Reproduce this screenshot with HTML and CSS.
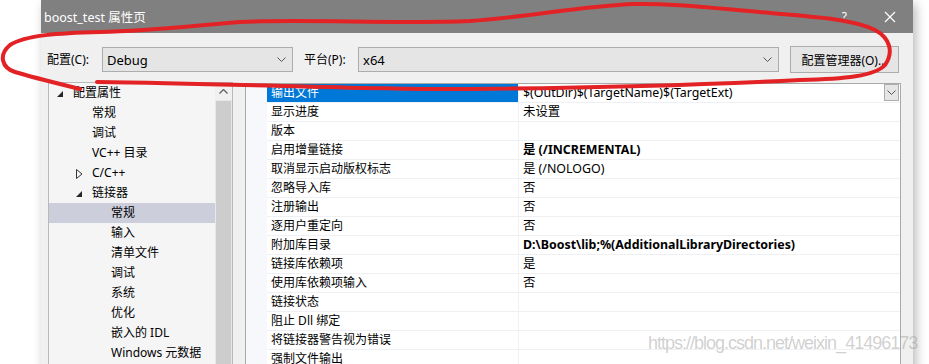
FILE: index.html
```html
<!DOCTYPE html>
<html lang="zh-CN">

<head>
    <meta charset="utf-8" />
    <title>boost_test 属性页</title>
    <link rel="stylesheet" href="styles.css">
</head>

<body>
    <div class="dialog">
        <div class="titlebar">
            <span class="title">boost_test 属性页</span>
            <span class="help">?</span>
            <svg class="close" width="12" height="12" viewBox="0 0 12 12">
                <path d="M1 1 L11 11 M11 1 L1 11" stroke="#fff" stroke-width="1.2" fill="none" />
            </svg>
        </div>

        <div class="toolbar">
            <label class="label label-config">配置(C):</label>
            <div class="combo combo-config">
                <span>Debug</span>
                <svg class="chevron" width="9" height="5" viewBox="0 0 9 5">
                    <path d="M0.5 0.5 L4.5 4.5 L8.5 0.5" stroke="#555" fill="none" />
                </svg>
            </div>
            <label class="label label-platform">平台(P):</label>
            <div class="combo combo-platform">
                <span>x64</span>
                <svg class="chevron" width="9" height="5" viewBox="0 0 9 5">
                    <path d="M0.5 0.5 L4.5 4.5 L8.5 0.5" stroke="#555" fill="none" />
                </svg>
            </div>
            <button class="btn-manager">配置管理器(O)...</button>
        </div>

        <div class="content">
            <div class="tree">
                <ul class="tree-list">
                    <li class="lvl0"><span class="exp"><svg width="6" height="6" viewBox="0 0 6 6"><path d="M6 0 L6 6 L0 6 Z" fill="#262626" /></svg></span>配置属性</li>
                    <li class="lvl1">常规</li>
                    <li class="lvl1">调试</li>
                    <li class="lvl1">VC++ 目录</li>
                    <li class="lvl1 has-exp"><span class="exp"><svg width="7" height="10" viewBox="0 0 7 10"><path d="M0.5 0.5 L6 5 L0.5 9.5 Z" fill="none" stroke="#333" /></svg></span>C/C++</li>
                    <li class="lvl1 has-exp"><span class="exp"><svg width="6" height="6" viewBox="0 0 6 6"><path d="M6 0 L6 6 L0 6 Z" fill="#262626" /></svg></span>链接器</li>
                    <li class="lvl2 selected">常规</li>
                    <li class="lvl2">输入</li>
                    <li class="lvl2">清单文件</li>
                    <li class="lvl2">调试</li>
                    <li class="lvl2">系统</li>
                    <li class="lvl2">优化</li>
                    <li class="lvl2">嵌入的 IDL</li>
                    <li class="lvl2">Windows 元数据</li>
                </ul>
                <div class="scrollbar">
                    <div class="scroll-up">
                        <svg width="9" height="5" viewBox="0 0 9 5"><path d="M0.5 4.5 L4.5 0.5 L8.5 4.5" stroke="#606060" stroke-width="1.3" fill="none" /></svg>
                    </div>
                    <div class="thumb"></div>
                </div>
            </div>

            <div class="grid">
                <div class="gutter"></div>
                <div class="rows">
                    <div class="row">
                        <div class="name active">输出文件</div>
                        <div class="value">$(OutDir)$(TargetName)$(TargetExt)
                            <span class="drop">
                                <svg width="9" height="5" viewBox="0 0 9 5"><path d="M0.5 0.5 L4.5 4.5 L8.5 0.5" stroke="#555" fill="none" /></svg>
                            </span>
                        </div>
                    </div>
                    <div class="row"><div class="name">显示进度</div><div class="value">未设置</div></div>
                    <div class="row"><div class="name">版本</div><div class="value"></div></div>
                    <div class="row"><div class="name">启用增量链接</div><div class="value bold">是 (/INCREMENTAL)</div></div>
                    <div class="row"><div class="name">取消显示启动版权标志</div><div class="value">是 (/NOLOGO)</div></div>
                    <div class="row"><div class="name">忽略导入库</div><div class="value">否</div></div>
                    <div class="row"><div class="name">注册输出</div><div class="value">否</div></div>
                    <div class="row"><div class="name">逐用户重定向</div><div class="value">否</div></div>
                    <div class="row"><div class="name">附加库目录</div><div class="value bold">D:\Boost\lib;%(AdditionalLibraryDirectories)</div></div>
                    <div class="row"><div class="name">链接库依赖项</div><div class="value">是</div></div>
                    <div class="row"><div class="name">使用库依赖项输入</div><div class="value">否</div></div>
                    <div class="row"><div class="name">链接状态</div><div class="value"></div></div>
                    <div class="row"><div class="name">阻止 Dll 绑定</div><div class="value"></div></div>
                    <div class="row"><div class="name">将链接器警告视为错误</div><div class="value"></div></div>
                    <div class="row"><div class="name">强制文件输出</div><div class="value"></div></div>
                </div>
            </div>
        </div>
    </div>

    <svg class="annotation" width="929" height="364" viewBox="0 0 929 364">
        <path d="M97 82 C250 84, 380 90, 470 89 C580 88, 700 85, 800 80 C845 79, 875 76, 885 65 C894 52, 890 38, 875 30 C855 20, 820 17, 770 13 C720 9, 680 3, 635 4 C580 6, 530 17, 470 21 C400 24, 300 19, 240 22 C200 25, 150 31, 100 32 C60 33, 25 35, 10 45 C-2 55, 2 68, 15 72 C35 78, 60 84, 80 89"
            stroke="#e32226" stroke-width="4" fill="none" stroke-linecap="round" stroke-linejoin="round" />
    </svg>

    <div class="watermark">https://blog.csdn.net/weixin_41496173</div>
</body>

</html>
```

FILE: styles.css
```css
:root {
    --dialog-bg: #f0f0f0;
    --title-bg: #808080;
    --border-color: #adadad;
    --combo-bg: #e5e5e5;
    --tree-bg: #f5f5f5;
    --tree-selected: #cccedb;
    --grid-line: #eef0f3;
    --row-active: #0078d7;
    --text-color: #000;
}

html,
body {
    margin: 0;
    height: 364px;
    overflow: hidden;
    background: #fff;
}

body {
    font-family: "Noto Sans", "Noto Sans CJK SC", sans-serif;
    font-size: 12px;
    color: var(--text-color);
    position: relative;
}

.dialog {
    margin-left: 41px;
    width: 872px;
    height: 380px;
    background: var(--dialog-bg);
    box-shadow: 3px 4px 10px rgba(0, 0, 0, 0.28);
}

.titlebar {
    height: 33px;
    background: var(--title-bg);
    color: #fff;
    display: flex;
    align-items: center;
    padding-left: 3px;
}

.title {
    font-size: 12.5px;
    flex: 1;
}

.help {
    font-size: 12px;
    margin-right: 37px;
}

.close {
    margin-right: 17px;
}

.toolbar {
    display: flex;
    align-items: center;
    height: 49px;
    box-sizing: border-box;
    padding: 13px 0 9px 6px;
}

.label {
    line-height: 16px;
}

.label-config {
    width: 55px;
}

.label-platform {
    width: 54px;
    margin-left: 11px;
}

.combo {
    height: 25px;
    box-sizing: border-box;
    border: 1px solid var(--border-color);
    background: var(--combo-bg);
    display: flex;
    align-items: center;
    justify-content: space-between;
    padding: 0 6px 0 4px;
    font-size: 13px;
}

.combo-config {
    width: 191px;
}

.combo-platform {
    width: 421px;
}

.btn-manager {
    margin-left: 11px;
    width: 109px;
    height: 27px;
    border: 1px solid var(--border-color);
    background: var(--combo-bg);
    font-family: inherit;
    font-size: 12px;
    color: var(--text-color);
    padding: 0;
    white-space: nowrap;
}

.content {
    display: flex;
    align-items: flex-start;
    padding-left: 7px;
}

.tree {
    width: 185px;
    height: 300px;
    box-sizing: border-box;
    border: 1px solid #b9b9b9;
    background: var(--tree-bg);
    display: flex;
}

.tree-list {
    list-style: none;
    margin: 0;
    padding: 0;
    flex: 1;
}

.tree-list li {
    height: 20px;
    line-height: 20px;
    display: flex;
    align-items: center;
    white-space: nowrap;
}

.tree-list .exp {
    width: 16px;
    display: flex;
    align-items: center;
}

.tree-list .lvl0 {
    padding-left: 8px;
}

.tree-list .lvl0 .exp svg {
    margin-top: 2px;
}

.tree-list .lvl1 {
    padding-left: 43px;
}

.tree-list .lvl1.has-exp {
    padding-left: 27px;
}

.tree-list .lvl1.has-exp .exp svg {
    margin-top: 1px;
}

.tree-list .lvl2 {
    padding-left: 62px;
}

.tree-list .selected {
    background: var(--tree-selected);
}

.scrollbar {
    width: 17px;
    background: #e8e8e8;
    display: flex;
    flex-direction: column;
}

.scroll-up {
    height: 17px;
    display: flex;
    align-items: center;
    justify-content: center;
    background: #f0f0f0;
}

.thumb {
    margin: 1px 1px 0 1px;
    flex: 1;
    background: #cdcdcd;
}

.grid {
    margin-left: 12px;
    margin-top: 1px;
    width: 656px;
    height: 300px;
    box-sizing: border-box;
    border: 1px solid #a9a9a9;
    background: #fff;
    display: flex;
}

.gutter {
    width: 21px;
    background: #f6f8fc;
}

.rows {
    flex: 1;
}

.row {
    display: flex;
    height: 19px;
    box-sizing: border-box;
    border-bottom: 1px solid var(--grid-line);
    white-space: nowrap;
}

.name {
    width: 252px;
    box-sizing: border-box;
    padding-left: 4px;
    line-height: 18px;
    border-right: 1px solid var(--grid-line);
}

.name.active {
    background: var(--row-active);
    color: #fff;
}

.value {
    flex: 1;
    padding-left: 4px;
    line-height: 18px;
    font-size: 12.4px;
    display: flex;
    justify-content: space-between;
}

.value.bold {
    font-weight: bold;
}

.drop {
    width: 15px;
    height: 17px;
    box-sizing: border-box;
    border: 1px solid var(--border-color);
    background: var(--combo-bg);
    display: flex;
    align-items: center;
    justify-content: center;
    margin-right: 1px;
}

.annotation {
    position: absolute;
    left: 0;
    top: 0;
    pointer-events: none;
}

.watermark {
    position: absolute;
    left: 648px;
    top: 333px;
    font-family: "Liberation Sans", sans-serif;
    font-size: 18px;
    letter-spacing: -1px;
    color: rgba(150, 150, 150, 0.45);
    pointer-events: none;
}
```
